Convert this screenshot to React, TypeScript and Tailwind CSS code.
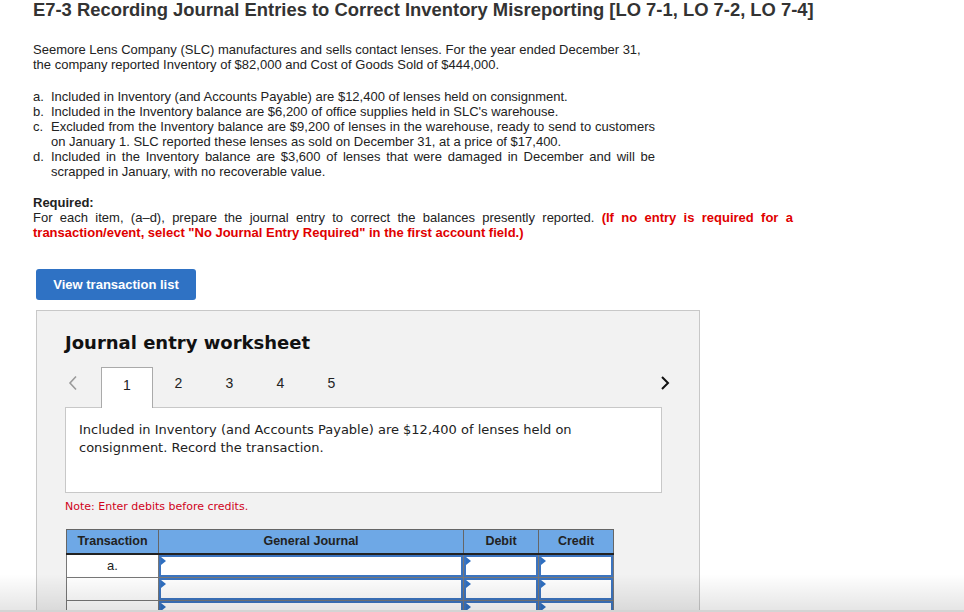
import React from "react";

const arial = { fontFamily: '"Liberation Sans", Arial, sans-serif' };
const verdana = { fontFamily: '"DejaVu Sans", Verdana, Tahoma, sans-serif' };

const items = [
  { k: "a.", t: "Included in Inventory (and Accounts Payable) are $12,400 of lenses held on consignment." },
  { k: "b.", t: "Included in the Inventory balance are $6,200 of office supplies held in SLC's warehouse." },
  {
    k: "c.",
    t: "Excluded from the Inventory balance are $9,200 of lenses in the warehouse, ready to send to customers on January 1. SLC reported these lenses as sold on December 31, at a price of $17,400.",
  },
  {
    k: "d.",
    t: "Included in the Inventory balance are $3,600 of lenses that were damaged in December and will be scrapped in January, with no recoverable value.",
  },
];

function InputCell({ w }: { w: string }) {
  return (
    <td className={`${w} p-0 border border-[#777] bg-white`}>
      <div className="relative h-[22px] border-2 border-[#3c74bf] bg-white">
        <span className="absolute left-0 top-0 w-0 h-0 border-t-[4px] border-b-[4px] border-l-[5px] border-t-transparent border-b-transparent border-l-[#2f6fc0]" />
      </div>
    </td>
  );
}

export default function App() {
  return (
    <div className="relative h-screen overflow-hidden bg-white text-[#222]">
      <div className="pl-[33px] pr-4" style={arial}>
        <h1 className="text-[18.4px] font-bold leading-[20px] text-[#333]">
          E7-3 Recording Journal Entries to Correct Inventory Misreporting [LO 7-1, LO 7-2, LO 7-4]
        </h1>

        <p className="mt-[22px] text-[13px] leading-[15px] w-[624px]">
          Seemore Lens Company (SLC) manufactures and sells contact lenses. For the year ended December 31, the
          company reported Inventory of $82,000 and Cost of Goods Sold of $444,000.
        </p>

        <ol className="mt-[17px] text-[13px] leading-[15px] w-[622px]">
          {items.map((it) => (
            <li key={it.k} className="flex">
              <span className="w-[18px] shrink-0">{it.k}</span>
              <span className="text-justify">{it.t}</span>
            </li>
          ))}
        </ol>

        <div className="mt-[16px] text-[13px] leading-[15px] w-[760px]">
          <div className="font-bold">Required:</div>
          <p className="text-justify">
            For each item, (a–d), prepare the journal entry to correct the balances presently reported.{" "}
            <span className="font-bold text-[#e00000]">
              (If no entry is required for a transaction/event, select "No Journal Entry Required" in the first
              account field.)
            </span>
          </p>
        </div>
      </div>

      <div className="ml-[36px] mt-[29px]">
        <button
          className="w-[160px] h-[31px] rounded-[3px] bg-[#2f72c4] text-white text-[13px] font-bold"
          style={arial}
        >
          View transaction list
        </button>

        <div className="mt-[10px] w-[664px] h-[400px] bg-[#f2f2f2] border border-[#c8c8c8] pl-[28px] pr-[37px]">
          <h2 className="mt-[21px] text-[18px] font-bold leading-[22px] text-[#111]" style={verdana}>
            Journal entry worksheet
          </h2>

          <div className="mt-[12px] flex items-end h-[41px] relative" style={arial}>
            <span className="w-[36px] pl-[3px] self-center pb-[8px]">
              <svg width="10" height="16" viewBox="0 0 10 16" fill="none" stroke="#9a9a9a" strokeWidth="1.6">
                <path d="M8 1.5 L2 8 L8 14.5" />
              </svg>
            </span>
            <div className="relative z-10 w-[52px] h-[41px] bg-white border border-b-0 border-[#aaa] flex items-center justify-center text-[14px] pb-[6px] -mb-px">
              1
            </div>
            {["2", "3", "4", "5"].map((n) => (
              <div key={n} className="w-[51px] h-[41px] flex items-center justify-center text-[14px] pb-[6px]">
                {n}
              </div>
            ))}
            <span className="ml-auto mr-[-8px] self-center pb-[8px]">
              <svg width="10" height="16" viewBox="0 0 10 16" fill="none" stroke="#111" strokeWidth="2">
                <path d="M2 2 L8 8 L2 14" />
              </svg>
            </span>
          </div>

          <div className="h-[86px] bg-white border border-[#c8c8c8] px-[13px] pt-[13px]">
            <p className="text-[13px] leading-[18px] w-[520px] text-[#222]" style={verdana}>
              Included in Inventory (and Accounts Payable) are $12,400 of lenses held on consignment. Record the
              transaction.
            </p>
          </div>

          <p className="mt-[7px] text-[11px] leading-[14px] text-[#d0021b]" style={verdana}>
            Note: Enter debits before credits.
          </p>

          <table className="mt-[15px] ml-[1px] border-collapse table-fixed w-[547px]" style={arial}>
            <thead>
              <tr className="bg-[#6ea8e6] h-[24px] text-[12.5px] font-bold text-[#222]">
                <th className="w-[92px] border border-[#666] border-b-2 border-b-[#222] font-bold">Transaction</th>
                <th className="w-[305px] border border-[#666] border-b-2 border-b-[#222] font-bold">General Journal</th>
                <th className="w-[75px] border border-[#666] border-b-2 border-b-[#222] font-bold">Debit</th>
                <th className="w-[75px] border border-[#666] border-b-2 border-b-[#222] font-bold">Credit</th>
              </tr>
            </thead>
            <tbody>
              {["a.", "", "", ""].map((t, i) => (
                <tr key={i}>
                  <td className="border border-[#777] bg-white text-center text-[13px] h-[23px] p-0">{t}</td>
                  <InputCell w="w-[305px]" />
                  <InputCell w="w-[75px]" />
                  <InputCell w="w-[75px]" />
                </tr>
              ))}
            </tbody>
          </table>
        </div>
      </div>

      <div className="pointer-events-none absolute left-0 right-0 bottom-0 h-[38px] bg-gradient-to-b from-transparent to-black/10 border-b-2 border-[#d4d4d4]" />
    </div>
  );
}
